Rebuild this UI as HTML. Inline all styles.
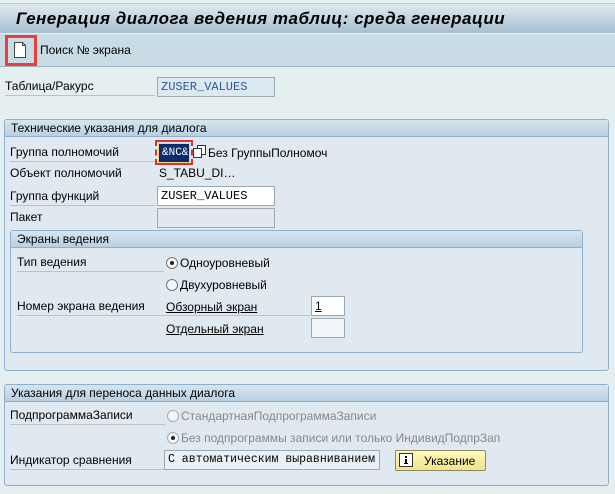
<!DOCTYPE html>
<html><head><meta charset="utf-8"><style>
*{margin:0;padding:0;box-sizing:border-box}
body{width:615px;height:494px;background:#e6efef;font-family:"Liberation Sans","DejaVu Sans",sans-serif;font-size:12px;color:#000;position:relative;overflow:hidden}
.a{position:absolute;white-space:nowrap}
.title{left:0;top:3px;width:615px;height:30px;background:linear-gradient(#e0e9f0,#a8bfd0);border-top:1px solid #c0ccd6}
.title span{position:absolute;left:16px;top:5px;font-size:17px;font-weight:bold;font-style:italic;letter-spacing:0.5px}
.tb{left:0;top:34px;width:615px;height:33px;background:#c9dce6;border-bottom:1px solid #9fb3c2}
.box{border:1px solid #8eb0cc;border-radius:3px;background:#dfe9ef}
.hdr{position:absolute;left:0;top:0;right:0;height:17px;background:linear-gradient(#d6e5f0,#b9d0e1);border-bottom:1px solid #8eb0cc;padding-left:6px;line-height:16px}
.inp{height:20px;border:1px solid #9aaab5;background:#fff;font-family:"Liberation Mono",monospace;font-size:12px;line-height:18px;padding-left:3px}
.ro{background:#dfe9ef}
.lbl{border-bottom:1px solid #b5c5cf;height:19px;line-height:18px}
.rad{width:12px;height:12px;border-radius:50%;border:1px solid #777;background:#f4f6f8}
.rad.on::after{content:"";position:absolute;left:3px;top:3px;width:4px;height:4px;border-radius:50%;background:#222}
.gray{color:#888}
u{text-decoration:underline}
</style></head><body>
<div class="a title"><span>Генерация диалога ведения таблиц: среда генерации</span></div>
<div class="a tb"></div>
<div class="a" style="left:5px;top:35px;width:32px;height:31px;border:3px solid #e84040"></div>
<svg class="a" style="left:13px;top:41px" width="14" height="18"><path d="M1.5 1.5h8l3 3v12h-11z" fill="#fff" stroke="#444"/><path d="M9.5 1.5v3h3" fill="none" stroke="#444"/></svg>
<div class="a" style="left:40px;top:43px">Поиск № экрана</div>

<div class="a lbl" style="left:5px;top:77px;width:150px">Таблица/Ракурс</div>
<div class="a inp" style="left:157px;top:77px;width:118px;background:#dce9f0;color:#2a5a9a">ZUSER_VALUES</div>

<div class="a box" style="left:4px;top:119px;width:605px;height:252px"><div class="hdr">Технические указания для диалога</div></div>
<div class="a lbl" style="left:10px;top:143px;width:145px">Группа полномочий</div>
<div class="a" style="left:155px;top:140px;width:38px;height:25px;border:2px solid #e03030;border-left-color:transparent;border-right-color:transparent;"></div>
<div class="a" style="left:155px;top:140px;width:38px;height:25px;border:2px dashed #e03030"></div>
<div class="a inp" style="left:158px;top:143px;width:32px;background:#0c2c6c;color:#fff;font-size:11px;border-color:#e8d890">&amp;NC&amp;</div>
<svg class="a" style="left:193px;top:145px" width="13" height="14"><rect x="4.5" y="0.5" width="8" height="9" fill="#fff" stroke="#333"/><rect x="0.5" y="3.5" width="8" height="9" fill="#fff" stroke="#333"/></svg>
<div class="a" style="left:208px;top:146px">Без ГруппыПолномоч</div>
<div class="a" style="left:10px;top:166px">Объект полномочий</div>
<div class="a" style="left:159px;top:166px">S_TABU_DI…</div>
<div class="a lbl" style="left:10px;top:187px;width:145px">Группа функций</div>
<div class="a inp" style="left:157px;top:186px;width:118px">ZUSER_VALUES</div>
<div class="a" style="left:10px;top:210px">Пакет</div>
<div class="a inp ro" style="left:157px;top:208px;width:118px"></div>

<div class="a box" style="left:10px;top:230px;width:573px;height:123px"><div class="hdr">Экраны ведения</div></div>
<div class="a lbl" style="left:17px;top:253px;width:147px">Тип ведения</div>
<div class="a rad on" style="left:166px;top:257px"></div>
<div class="a" style="left:180px;top:256px">Одноуровневый</div>
<div class="a rad" style="left:166px;top:279px"></div>
<div class="a" style="left:180px;top:278px">Двухуровневый</div>
<div class="a lbl" style="left:17px;top:297px;width:147px">Номер экрана ведения</div>
<div class="a" style="left:166px;top:300px"><u>Обзорный экран</u></div>
<div class="a" style="left:166px;top:322px"><u>Отдельный экран</u></div>
<div class="a lbl" style="left:164px;top:297px;width:146px;border-color:#b5c5cf;height:19px"></div>
<div class="a inp" style="left:311px;top:296px;width:34px;font-family:'Liberation Sans',sans-serif"><u>1</u></div>
<div class="a inp" style="left:311px;top:318px;width:34px;background:#f1f5f7"></div>

<div class="a box" style="left:4px;top:384px;width:605px;height:102px"><div class="hdr">Указания для переноса данных диалога</div></div>
<div class="a lbl" style="left:10px;top:406px;width:155px">ПодпрограммаЗаписи</div>
<div class="a rad" style="left:167px;top:410px;border-color:#aaa"></div>
<div class="a gray" style="left:181px;top:409px">СтандартнаяПодпрограммаЗаписи</div>
<div class="a rad on" style="left:167px;top:432px;border-color:#aaa"></div>
<div class="a gray" style="left:181px;top:431px">Без подпрограммы записи или только ИндивидПодпрЗап</div>
<div class="a lbl" style="left:10px;top:451px;width:155px">Индикатор сравнения</div>
<div class="a inp" style="left:164px;top:450px;width:216px;background:#eaf0f3;font-size:11.5px">С автоматическим выравниванием</div>
<div class="a" style="left:395px;top:450px;width:91px;height:21px;border:1px solid #8a8a60;border-radius:2px;background:linear-gradient(#fff8c0,#f3e38a)"></div>
<svg class="a" style="left:399px;top:453px" width="14" height="14"><rect x="0.5" y="0.5" width="13" height="13" fill="#fff" stroke="#333"/><rect x="6" y="3" width="2" height="2" fill="#000"/><rect x="6" y="6" width="2" height="5" fill="#000"/><rect x="5" y="10" width="4" height="1" fill="#000"/></svg>
<div class="a" style="left:424px;top:454px">Указание</div>
</body></html>
